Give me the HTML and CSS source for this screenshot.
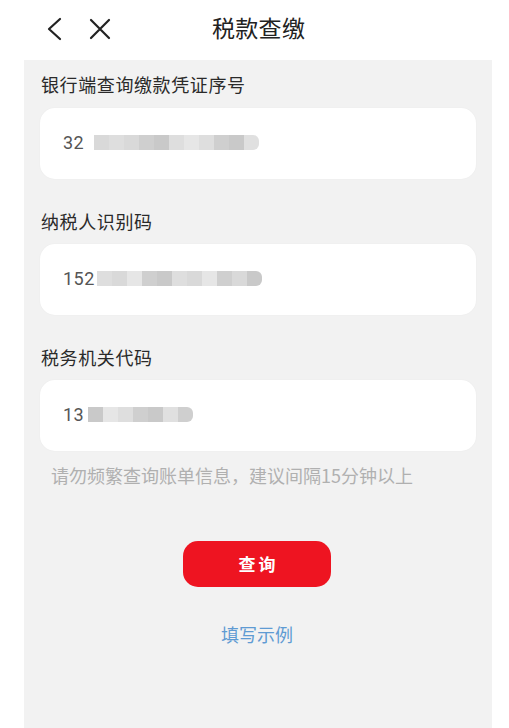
FILE: index.html
```html
<!DOCTYPE html>
<html lang="zh">
<head>
<meta charset="utf-8">
<title>税款查缴</title>
<link rel="stylesheet" href="styles.css">
</head>
<body>
<header class="topbar">
  <svg class="icon-back" width="16" height="24" viewBox="0 0 16 24"><polyline points="14,2 3,12 14,22" fill="none" stroke="#222" stroke-width="2.2" stroke-linecap="round" stroke-linejoin="round"/></svg>
  <svg class="icon-close" width="22" height="22" viewBox="0 0 22 22"><path d="M2 2 L20 20 M20 2 L2 20" fill="none" stroke="#222" stroke-width="2.2" stroke-linecap="round"/></svg>
  <h1 class="title">税款查缴</h1>
</header>
<main class="panel">
  <section class="field first">
    <div class="label">银行端查询缴款凭证序号</div>
    <div class="card">
      <span class="value">32</span><span class="mosaic m1"><i class="a"></i><i class="b"></i><i class="a"></i><i class="c"></i><i class="d"></i><i class="b"></i><i class="e"></i><i class="b"></i><i class="c"></i><i class="d"></i><i class="f"></i></span>
    </div>
  </section>
  <section class="field">
    <div class="label">纳税人识别码</div>
    <div class="card">
      <span class="value">152</span><span class="mosaic m2"><i class="b"></i><i class="a"></i><i class="e"></i><i class="c"></i><i class="d"></i><i class="b"></i><i class="a"></i><i class="e"></i><i class="c"></i><i class="a"></i><i class="d"></i></span>
    </div>
  </section>
  <section class="field">
    <div class="label">税务机关代码</div>
    <div class="card">
      <span class="value">13</span><span class="mosaic m3"><i class="d"></i><i class="e"></i><i class="b"></i><i class="c"></i><i class="d"></i><i class="f"></i><i class="c"></i></span>
    </div>
  </section>
  <p class="hint">请勿频繁查询账单信息，建议间隔15分钟以上</p>
  <div class="actions">
    <button class="btn-query">查询</button>
    <a class="example">填写示例</a>
  </div>
</main>
</body>
</html>
```
FILE: styles.css
```css
html, body {
  margin: 0;
  padding: 0;
  background: #ffffff;
  font-family: "Noto Sans CJK SC", "Noto Sans", sans-serif;
}
body {
  width: 509px;
  height: 728px;
  overflow: hidden;
  display: flex;
  flex-direction: column;
}
.topbar {
  height: 60px;
  flex: none;
  display: flex;
  align-items: center;
  padding-left: 46px;
  box-sizing: border-box;
}
.icon-back { margin-top: -3px; }
.icon-close { margin-left: 27px; margin-top: -3px; }
.title {
  margin: -7px 0 0 101px;
  font-size: 23px;
  font-weight: 400;
  color: #222;
  letter-spacing: 0.3px;
  line-height: 30px;
}
.panel {
  flex: 1;
  margin: 0 17px 0 24px;
  background: #f2f2f2;
  padding: 11px 16px 0 16px;
  display: flex;
  flex-direction: column;
}
.field { margin-top: 29px; }
.field.first { margin-top: 0; }
.label {
  font-size: 18px;
  line-height: 26px;
  color: #2a2a2a;
  padding-left: 1px;
  letter-spacing: 0.6px;
  margin-bottom: 11px;
}
.field + .field .label { margin-bottom: 10px; }
.card {
  height: 71px;
  background: #fff;
  border-radius: 15px;
  box-shadow: 0 0 2px rgba(0,0,0,0.04);
  display: flex;
  align-items: center;
  padding-left: 23px;
}
.value {
  font-family: "Roboto", "Noto Sans", sans-serif;
  font-size: 18px;
  color: #555;
  letter-spacing: 0.5px;
  margin-top: -2px;
}
.mosaic {
  display: flex;
  height: 15px;
  margin-top: -2px;
}
.m1 { margin-left: 10px; }
.m2 { margin-left: 2px; }
.m3 { margin-left: 4px; }
.mosaic i {
  display: block;
  width: 15px;
  height: 15px;
}
.mosaic i:last-child { border-radius: 0 6px 6px 0; }
.mosaic .a { background: #d9d9d9; }
.mosaic .b { background: #dedede; }
.mosaic .c { background: #cfcfcf; }
.mosaic .d { background: #c9c9c9; }
.mosaic .e { background: #e6e6e6; }
.mosaic .f { background: #e0e0e0; }
.hint {
  margin: 11px 0 0 11px;
  font-size: 18px;
  line-height: 26px;
  color: #b0b0b0;
}
.actions {
  display: flex;
  flex-direction: column;
  align-items: center;
  padding-right: 2px;
}
.btn-query {
  margin-top: 53px;
  width: 148px;
  height: 46px;
  border: none;
  border-radius: 15px;
  background: #ee1421;
  color: #fff;
  font-family: "Noto Sans CJK SC", sans-serif;
  font-size: 17px;
  font-weight: 700;
  letter-spacing: 3px;
  padding: 0 0 2px 3px;
}
.example {
  margin-top: 34px;
  font-size: 18px;
  line-height: 26px;
  color: #5f9bd3;
}
```
